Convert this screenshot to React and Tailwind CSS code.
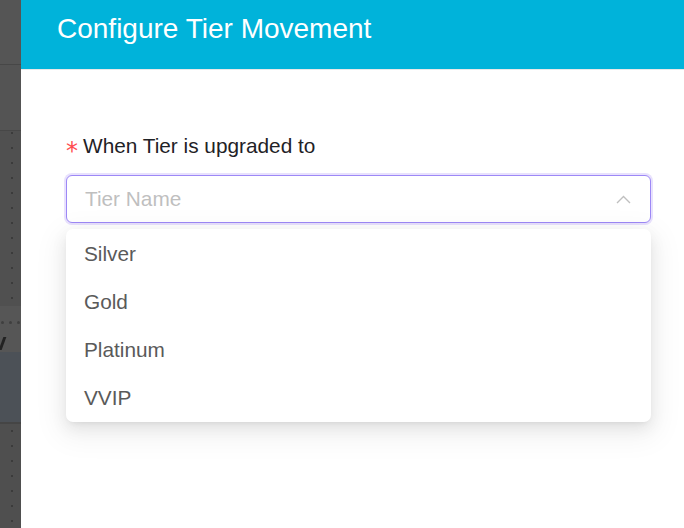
import React from 'react';

const tiers = ['Silver', 'Gold', 'Platinum', 'VVIP'];

// Dotted guide column of the page that sits behind the modal mask
const DotColumn = ({ count, className }) => (
    <div className={`flex flex-col gap-[13px] pl-[11px] ${className}`}>
        {Array.from({ length: count }).map((_, i) => (
            <div key={i} className="w-[2px] h-[2px] bg-[#3b3b3b]" />
        ))}
    </div>
);

const BackdropStrip = () => (
    <div className="w-[21px] shrink-0 h-full flex flex-col overflow-hidden bg-[#4f4f4f]">
        <div className="h-[65px] shrink-0 bg-[#555555] border-b border-[#474747]" />
        <div className="h-[66px] shrink-0 bg-[#545454] border-b border-[#474747]" />
        <DotColumn count={12} className="h-[175px] shrink-0 pt-[1px] bg-[#505050]" />
        <div className="h-[46px] shrink-0 bg-[#565656] flex flex-col">
            <div className="flex gap-[5px] pl-[1px] mt-[15px]">
                <div className="w-[3px] h-[3px] rounded-full bg-[#3f3f3f]" />
                <div className="w-[3px] h-[3px] rounded-full bg-[#3f3f3f]" />
                <div className="w-[3px] h-[3px] rounded-full bg-[#3f3f3f]" />
            </div>
            {/* tail of a stroke from the page underneath */}
            <div className="ml-[1px] mt-[13px] w-[2.5px] h-[13px] bg-[#222222] -skew-x-[20deg]" />
        </div>
        <div className="h-[72px] shrink-0 bg-[#4c5157] border-b-2 border-[#454545]" />
        <DotColumn count={7} className="pt-[6px]" />
    </div>
);

const TierSelect = () => (
    <div className="flex flex-col">
        <div className="h-[48px] rounded-[6px] border border-[#9d88f6] ring-2 ring-[#e8e1fd] bg-white flex items-center justify-between pl-[18px] pr-[19px]">
            <span className="text-[20.8px] text-[#bfbfbf]">Tier Name</span>
            <svg width="15" height="9" viewBox="0 0 15 9" fill="none">
                <path d="M1 8 L7.5 1.5 L14 8" stroke="#bfbfbf" strokeWidth="1.4" />
            </svg>
        </div>
        <ul className="mt-[6px] pt-[1px] rounded-[7px] bg-white shadow-[0_6px_16px_0_rgba(0,0,0,0.08),0_3px_6px_-4px_rgba(0,0,0,0.12),0_9px_28px_8px_rgba(0,0,0,0.05)]">
            {tiers.map((tier) => (
                <li key={tier} className="h-12 flex items-center pl-[18px] text-[20.8px] text-[#5a5a5a]">
                    {tier}
                </li>
            ))}
        </ul>
    </div>
);

export default function App() {
    return (
        <div className="w-full h-[528px] flex overflow-hidden bg-white font-['Liberation_Sans',Arial,sans-serif]">
            <BackdropStrip />

            <div className="flex-1 flex flex-col bg-white">
                {/* Modal header */}
                <div className="h-[70px] shrink-0 bg-[#00b3da] border-b border-[#e8e8e8] pl-[36px] pt-[15px]">
                    <h2 className="text-[28px] leading-[28px] text-white">Configure Tier Movement</h2>
                </div>

                {/* Modal body */}
                <div className="flex-1 pl-[45px] pr-[33px] pt-[65px]">
                    <label className="flex items-start text-[20.8px] leading-[21px] text-[#1f2226]">
                        <span className="w-[17px] shrink-0 text-[#ff4d4f] font-['DejaVu_Sans',sans-serif] text-[24px] translate-y-[6px]">*</span>
                        When Tier is upgraded to
                    </label>
                    <div className="mt-[19px]">
                        <TierSelect />
                    </div>
                </div>
            </div>
        </div>
    );
}
